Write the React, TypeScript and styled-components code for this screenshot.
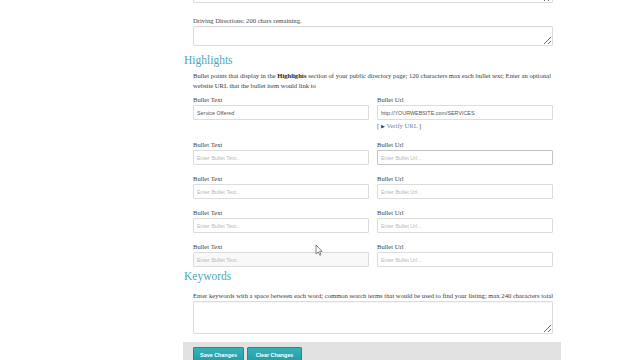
import React from "react";
import styled, { createGlobalStyle } from "styled-components";

const Global = createGlobalStyle`
  html, body { margin: 0; padding: 0; background: #ffffff; overflow: hidden; }
  body { font-family: "Liberation Serif", "Times New Roman", serif; }
  * { box-sizing: border-box; }
`;

const Page = styled.div`
  position: relative;
  width: 640px;
  height: 360px;
  overflow: hidden;
`;

const Panel = styled.div`
  margin-left: 183px;
  width: 378px;
  margin-top: -30px;
`;

const Body = styled.div`
  padding-left: 10px;
  width: 371px;
`;

const Heading = styled.h2<{ $top: number }>`
  margin: 0;
  padding-left: 1px;
  font-family: "Liberation Serif", Georgia, serif;
  font-weight: normal;
  font-size: 11.5px;
  line-height: 14px;
  color: #4aa7bb;
  margin-top: ${(p) => p.$top}px;
`;

const Text = styled.p<{ $top?: number; $bottom?: number }>`
  margin: ${(p) => p.$top ?? 0}px 0 ${(p) => p.$bottom ?? 0}px;
  font-size: 6.6px;
  line-height: 10px;
  color: #3a3a3a;
  width: 362px;
  strong { color: #222; font-weight: bold; }
`;

const Label = styled.div`
  font-size: 6.6px;
  line-height: 8px;
  color: #444;
  margin-bottom: 1px;
`;

const Area = styled.textarea<{ $h: number }>`
  display: block;
  width: 360px;
  height: ${(p) => p.$h}px;
  border: 1px solid #dcdcdc;
  border-radius: 1px;
  box-shadow: inset 0 1px 1px rgba(0, 0, 0, 0.04);
  background: #fff;
  resize: vertical;
  padding: 2px 4px;
  font-size: 6px;
  outline: none;
`;

const Grid = styled.div`
  display: grid;
  grid-template-columns: 176px 176px;
  column-gap: 8px;
  row-gap: 10px;
  margin-top: 5px;
`;

const Field = styled.div``;

const Input = styled.input<{ $dark?: boolean; $shade?: boolean }>`
  display: block;
  width: 176px;
  height: 15px;
  border: 1px solid ${(p) => (p.$dark ? "#c4c4c4" : "#dcdcdc")};
  border-radius: 1px;
  background: ${(p) => (p.$shade ? "#f8f8f8" : "#fff")};
  padding: 0 3px;
  font-family: "Liberation Sans", Arial, sans-serif;
  font-size: 5.4px;
  color: #555;
  outline: none;
  &::placeholder { color: #b8b8b8; }
`;

const Verify = styled.div`
  font-size: 6.6px;
  line-height: 8px;
  margin-top: 2px;
  color: #555;
  span { color: #6b84b0; }
  i { font-style: normal; color: #2c4a80; font-size: 5px; }
`;

const Bar = styled.div`
  margin-top: 8px;
  height: 30px;
  background: #e2e2e2;
  padding: 5px 0 0 10px;
  display: flex;
  gap: 3px;
`;

const Button = styled.button<{ $w: number }>`
  width: ${(p) => p.$w}px;
  height: 18px;
  border: 1px solid #1f8c93;
  border-radius: 1px;
  background: linear-gradient(#36b2b9, #1f99a1);
  color: #fff;
  font-family: "Liberation Sans", Arial, sans-serif;
  font-weight: bold;
  font-size: 5.4px;
  padding: 0 0 3px;
`;

const Cursor = styled.svg`
  position: absolute;
  left: 315px;
  top: 244px;
`;

const rows = [
  { text: "Service Offered", url: "http://YOURWEBSITE.com/SERVICES" },
  { text: "", url: "" },
  { text: "", url: "" },
  { text: "", url: "" },
  { text: "", url: "" },
];

export default function App() {
  return (
    <Page>
      <Global />
      <Panel>
        <Body>
          <Area $h={33} readOnly />
          <Text $top={13}>
            <Label as="span">Driving Directions: 200 chars remaining.</Label>
          </Text>
          <Area $h={20} readOnly />
        </Body>
        <Heading $top={7}>Highlights</Heading>
        <Body>
          <Text $top={4}>
            Bullet points that display in the <strong>Highlights</strong> section of your public directory page; 120 characters max each bullet text; Enter an optional website URL that the bullet item would link to
          </Text>
          <Grid>
            {rows.map((r, i) => (
              <React.Fragment key={i}>
                <Field>
                  <Label>Bullet Text</Label>
                  <Input
                    readOnly
                    value={r.text}
                    placeholder="Enter Bullet Text..."
                    $shade={i === 4}
                  />
                </Field>
                <Field>
                  <Label>Bullet Url</Label>
                  <Input
                    readOnly
                    value={r.url}
                    placeholder="Enter Bullet Url..."
                    $dark={i === 1}
                  />
                  {i === 0 && (
                    <Verify>
                      [ <i>▶</i> <span>Verify URL</span> ]
                    </Verify>
                  )}
                </Field>
              </React.Fragment>
            ))}
          </Grid>
        </Body>
        <Heading $top={2}>Keywords</Heading>
        <Body>
          <Text $top={8} $bottom={0}>
            Enter keywords with a space between each word; common search terms that would be used to find your listing; max 240 characters total
          </Text>
          <Area $h={33} readOnly />
        </Body>
        <Bar>
          <Button $w={51}>Save Changes</Button>
          <Button $w={55}>Clear Changes</Button>
        </Bar>
      </Panel>
      <Cursor width="8" height="12" viewBox="0 0 8 12">
        <path d="M1 1 L1 10 L3.2 8 L4.8 11.2 L6 10.6 L4.5 7.5 L7 7.3 Z" fill="#fff" stroke="#666" strokeWidth="0.8" />
      </Cursor>
    </Page>
  );
}
